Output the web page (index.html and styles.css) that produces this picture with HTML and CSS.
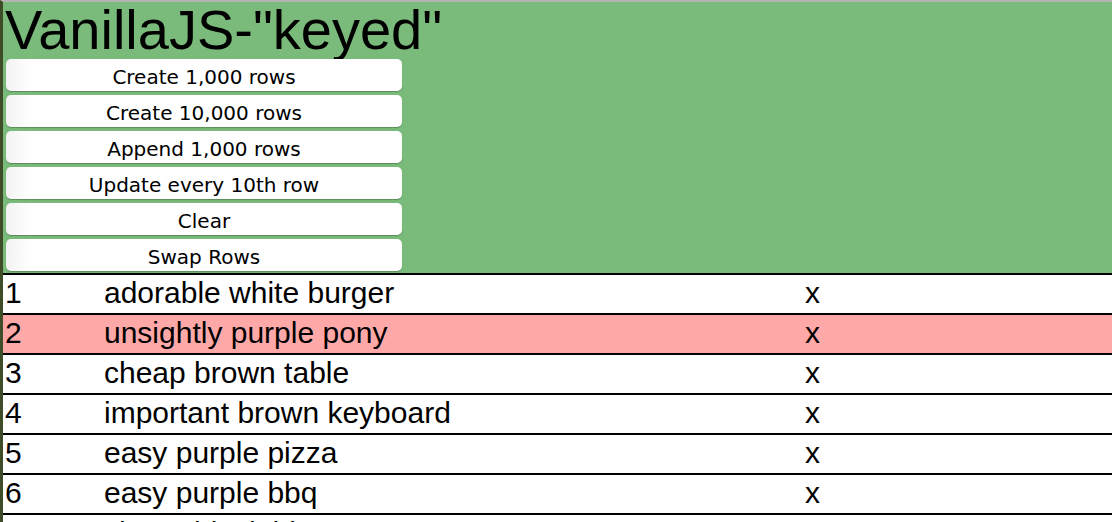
FILE: index.html
```html
<!DOCTYPE html>
<html>
<head>
    <title>VanillaJS-"keyed"</title>
    <link rel="stylesheet" href="styles.css">
</head>
<body>
    <div class="jumbotron">
        <h1>VanillaJS-"keyed"</h1>
        <div class="buttons">
            <button type="button" id="run">Create 1,000 rows</button>
            <button type="button" id="runlots">Create 10,000 rows</button>
            <button type="button" id="add">Append 1,000 rows</button>
            <button type="button" id="update">Update every 10th row</button>
            <button type="button" id="clear">Clear</button>
            <button type="button" id="swaprows">Swap Rows</button>
        </div>
    </div>
    <table class="rows">
        <tbody>
            <tr><td class="col-id">1</td><td class="col-label">adorable white burger</td><td class="col-remove">x</td></tr>
            <tr class="danger"><td class="col-id">2</td><td class="col-label">unsightly purple pony</td><td class="col-remove">x</td></tr>
            <tr><td class="col-id">3</td><td class="col-label">cheap brown table</td><td class="col-remove">x</td></tr>
            <tr><td class="col-id">4</td><td class="col-label">important brown keyboard</td><td class="col-remove">x</td></tr>
            <tr><td class="col-id">5</td><td class="col-label">easy purple pizza</td><td class="col-remove">x</td></tr>
            <tr><td class="col-id">6</td><td class="col-label">easy purple bbq</td><td class="col-remove">x</td></tr>
            <tr><td class="col-id">7</td><td class="col-label">cheap black bbq</td><td class="col-remove">x</td></tr>
        </tbody>
    </table>
</body>
</html>
```

FILE: styles.css
```css
html, body {
    margin: 0;
    padding: 0;
    background: #ffffff;
    overflow: hidden;
}

body {
    border-top: 2px solid #b4b4b4;
    border-left: 3px solid #3e4c28;
    font-family: "Liberation Sans", Arial, sans-serif;
    color: #000;
}

.jumbotron {
    background-color: #7aba7a;
    padding: 0 0 2px 0;
}

h1 {
    margin: 0;
    padding-left: 2px;
    font-size: 56px;
    font-weight: normal;
    line-height: 56px;
    height: 57px;
}

.buttons {
    display: flex;
    flex-direction: column;
    gap: 4px;
    width: 396px;
    margin-left: 3px;
}

.buttons button {
    height: 32px;
    padding: 3px 0 0 0;
    border: none;
    border-radius: 5px;
    background: linear-gradient(90deg, #f2f2f2 0%, #ffffff 6%, #ffffff 100%);
    box-shadow: 0 1px 1px rgba(0, 0, 0, 0.25);
    font-family: "DejaVu Sans", Verdana, sans-serif;
    font-size: 20px;
    color: #000;
    cursor: pointer;
}

.rows {
    width: 100%;
    border-collapse: collapse;
}

.rows tr {
    height: 40px;
    border-top: 2px solid #000;
}

.rows tr.danger {
    background-color: #ffa8a8;
}

.rows td {
    padding: 0 0 3px 0;
    font-size: 30px;
    vertical-align: middle;
}

.col-id {
    width: 99px;
    padding-left: 2px !important;
}

.col-label {
    width: 700px;
}

.col-remove {
    padding-left: 1px !important;
}
```
